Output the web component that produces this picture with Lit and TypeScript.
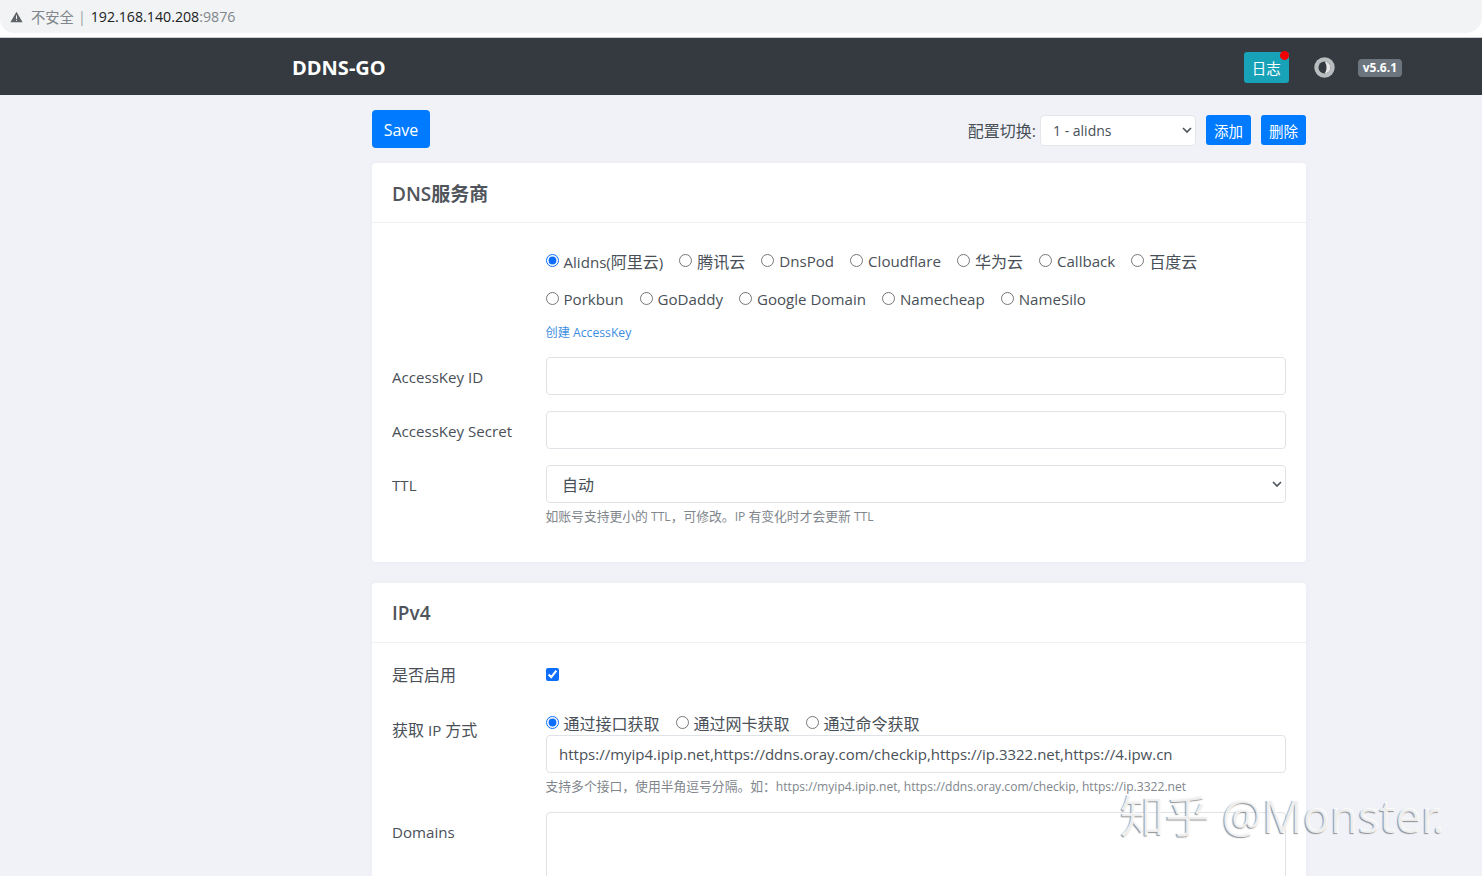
import { LitElement, html, css } from 'lit';
import { customElement } from 'lit/decorators.js';

const chevron = html`<svg class="chev" width="10" height="6" viewBox="0 0 10 6"><path d="M1 1l4 4 4-4" fill="none" stroke="#50565c" stroke-width="1.7"/></svg>`;

@customElement('app-root')
export class AppRoot extends LitElement {
  static styles = css`
    :host {
      display: block;
      height: 876px;
      overflow: hidden;
      position: relative;
      background: #f0f2f7;
      color: #495057;
      font-family: 'Open Sans', 'Noto Sans CJK SC', sans-serif;
      font-size: 15px;
    }
    * { box-sizing: border-box; }

    /* browser chrome */
    .chrome {
      height: 38px;
      background: #fff;
      border-bottom: 1px solid #c9ccd0;
    }
    .addr {
      height: 33px;
      background: #f1f3f4;
      border-radius: 0 0 16px 14px;
      display: flex;
      align-items: center;
      padding-left: 10px;
      font-size: 14.2px;
      color: #80868b;
    }
    .addr svg { margin-right: 8px; }
    .addr .sep { margin: 0 5px 0 4px; color: #9aa0a6; }
    .addr .host { color: #202124; }
    .addr .cn { font-size: 14.3px; }

    /* navbar */
    .nav {
      height: 57px;
      background: #343a40;
      display: flex;
      align-items: center;
      padding: 1px 80px 0 292px;
    }
    .brand {
      color: #fff;
      font-weight: 700;
      font-size: 20px;
      flex: 1;
    }
    .log {
      position: relative;
      width: 45px;
      height: 31px;
      background: #17a2b8;
      color: #fff;
      border: 0;
      border-radius: 3px;
      font: inherit;
      font-size: 14.5px;
      padding: 0;
      margin-right: 25px;
    }
    .dot {
      position: absolute;
      top: -1px;
      right: 0;
      width: 9px;
      height: 9px;
      border-radius: 50%;
      background: #f00000;
    }
    .theme { display: block; margin-right: 23px; }
    .badge {
      background: #6c757d;
      color: #fff;
      font-size: 12px;
      font-weight: 700;
      border-radius: 4px;
      padding: 0 5px;
      height: 18px;
      line-height: 18px;
      margin-top: 1px;
    }

    /* page */
    .main {
      width: 934px;
      margin-left: 372px;
    }
    .toolbar {
      display: flex;
      align-items: center;
      height: 68px;
    }
    .save {
      width: 58px;
      height: 38px;
      background: #007bff;
      color: #fff;
      border: 0;
      border-radius: 4px;
      font: inherit;
      font-size: 16px;
      padding: 1px 0 0;
    }
    .switch {
      margin-left: auto;
      display: flex;
      align-items: center;
      font-size: 16px;
      padding-top: 2px;
    }
    .select-wrap { position: relative; display: block; }
    .chev { position: absolute; top: 50%; right: 4px; margin-top: -3px; pointer-events: none; }
    .switch .select-wrap { margin: 0 10px 0 4px; }
    .switch select {
      display: block;
      appearance: none;
      width: 156px;
      height: 31px;
      padding: 0 12px;
      background: #fff;
      border: 1px solid #e3e6ea;
      border-radius: 4px;
      color: #495057;
      font: inherit;
      font-size: 14px;
    }
    .small {
      width: 45px;
      height: 30px;
      background: #007bff;
      color: #fff;
      border: 0;
      border-radius: 3px;
      font: inherit;
      font-size: 14.5px;
      padding: 0;
    }
    .small + .small { margin-left: 10px; }

    .card {
      background: #fff;
      border-radius: 4px;
      margin-bottom: 21px;
      box-shadow: 0 0 6px rgba(0, 0, 0, 0.03);
    }
    .card-head {
      height: 60px;
      padding: 0 20px;
      display: flex;
      align-items: center;
      font-size: 19px;
      font-weight: 600;
      color: #50555b;
      border-bottom: 1px solid #eff0f2;
    }
    .card-body { padding: 19px 20px 0; }
    .dns-body { height: 339px; }

    .row { display: flex; }
    .label {
      width: 153.5px;
      flex: none;
      padding-top: 9px;
      line-height: 22px;
      font-size: 15.1px;
    }
    .cn { font-size: 16px; }
    .field { flex: 1; min-width: 0; }

    .radios {
      display: flex;
      align-items: center;
      height: 38px;
      font-size: 15.1px;
    }
    .radios label { display: flex; align-items: center; margin-right: 16px; }
    .radios input {
      width: 13px;
      height: 13px;
      margin: 0 5px 2px 0;
      accent-color: #0d6efd;
    }
    .link {
      font-size: 12.2px;
      color: #3d8ee0;
      line-height: 18px;
      margin: 6px 0 15px;
    }
    .control {
      display: block;
      width: 100%;
      height: 38px;
      border: 1px solid #dfe2e6;
      border-radius: 4px;
      background: #fff;
      color: #495057;
      font: inherit;
      padding: 0 12.5px;
      margin-bottom: 16px;
      font-size: 15px;
    }
    select.control {
      appearance: none;
      font-size: 16px;
      padding: 2px 15.5px 0;
      margin-bottom: 0;
    }
    .help {
      font-size: 12.1px;
      color: #80868c;
      line-height: 16px;
      margin-top: 5px;
      white-space: nowrap;
    }
    .help .zh { font-size: 12.8px; }
    .enable-row { height: 49px; align-items: flex-start; }
    .enable-row .label { padding-top: 2px; }
    .enable-row input {
      width: 13px;
      height: 13px;
      margin: 6px 0 0 0;
      accent-color: #0d6efd;
    }
    .ip-row .label { padding-top: 8px; }
    .ip-row .radios { height: 24px; }
    .ip-row .control { margin-bottom: 0; font-size: 15px; }
    .domains { margin-top: 17px; }
    .domains .label { padding-top: 9px; }
    .domains textarea {
      height: 150px;
      resize: none;
    }

    .watermark {
      position: absolute;
      left: 1120px;
      top: 787px;
      font-family: 'Noto Sans', 'Noto Sans CJK SC', sans-serif;
      font-size: 45px;
      line-height: 58px;
      white-space: nowrap;
      color: rgba(255, 255, 255, 0.85);
      text-shadow: -1px 1px 1px rgba(110, 110, 110, 0.75);
    }
  `;

  radio(text: unknown, name: string, checked = false) {
    return html`<label><input type="radio" name=${name} ?checked=${checked} /><span>${text}</span></label>`;
  }

  render() {
    const cn = (t: string) => html`<span class="cn">${t}</span>`;
    const zh = (t: string) => html`<span class="zh">${t}</span>`;
    return html`
      <div class="chrome">
        <div class="addr">
          <svg width="13" height="12" viewBox="0 0 13 12"><path d="M6.5 .8 12.6 11.2H.4Z" fill="#5f6368"/><rect x="6" y="4.4" width="1" height="3.6" fill="#f1f3f4"/><rect x="6" y="8.8" width="1" height="1" fill="#f1f3f4"/></svg>
          <span class="cn">不安全</span><span class="sep">|</span><span class="host">192.168.140.208</span>:9876
        </div>
      </div>
      <div class="nav">
        <div class="brand">DDNS-GO</div>
        <button class="log">日志<span class="dot"></span></button>
        <svg class="theme" width="21" height="21" viewBox="0 0 21 21">
          <circle cx="10.5" cy="10.5" r="10.2" fill="#b9bdc0"/>
          <circle cx="10.5" cy="10.5" r="6" fill="#343a40"/>
          <path d="M10.5 4.5a6 6 0 0 1 0 12c1.4-1.6 2-3.6 2-6s-.6-4.4-2-6Z" fill="#e4e6e7"/>
        </svg>
        <span class="badge">v5.6.1</span>
      </div>
      <div class="main">
        <div class="toolbar">
          <button class="save">Save</button>
          <div class="switch">
            配置切换:
            <span class="select-wrap">
              <select><option>1 - alidns</option></select>
              ${chevron}
            </span>
            <button class="small">添加</button>
            <button class="small">删除</button>
          </div>
        </div>

        <section class="card">
          <div class="card-head">DNS服务商</div>
          <div class="card-body dns-body">
            <div class="row">
              <div class="label"></div>
              <div class="field">
                <div class="radios">
                  ${this.radio(html`Alidns(${cn('阿里云')})`, 'dns', true)}
                  ${this.radio(cn('腾讯云'), 'dns')}
                  ${this.radio('DnsPod', 'dns')}
                  ${this.radio('Cloudflare', 'dns')}
                  ${this.radio(cn('华为云'), 'dns')}
                  ${this.radio('Callback', 'dns')}
                  ${this.radio(cn('百度云'), 'dns')}
                </div>
                <div class="radios">
                  ${this.radio('Porkbun', 'dns')}
                  ${this.radio('GoDaddy', 'dns')}
                  ${this.radio('Google Domain', 'dns')}
                  ${this.radio('Namecheap', 'dns')}
                  ${this.radio('NameSilo', 'dns')}
                </div>
                <div class="link">创建 AccessKey</div>
              </div>
            </div>
            <div class="row">
              <div class="label">AccessKey ID</div>
              <div class="field"><input class="control" /></div>
            </div>
            <div class="row">
              <div class="label">AccessKey Secret</div>
              <div class="field"><input class="control" /></div>
            </div>
            <div class="row">
              <div class="label">TTL</div>
              <div class="field">
                <span class="select-wrap">
                  <select class="control"><option>自动</option></select>
                  ${chevron}
                </span>
                <div class="help">${zh('如账号支持更小的')} TTL${zh('，可修改。')}IP ${zh('有变化时才会更新')} TTL</div>
              </div>
            </div>
          </div>
        </section>

        <section class="card">
          <div class="card-head">IPv4</div>
          <div class="card-body">
            <div class="row enable-row">
              <div class="label">${cn('是否启用')}</div>
              <div class="field"><input type="checkbox" checked /></div>
            </div>
            <div class="row ip-row">
              <div class="label">${cn('获取')} IP ${cn('方式')}</div>
              <div class="field">
                <div class="radios">
                  ${this.radio(cn('通过接口获取'), 'ip', true)}
                  ${this.radio(cn('通过网卡获取'), 'ip')}
                  ${this.radio(cn('通过命令获取'), 'ip')}
                </div>
                <input class="control" value="https://myip4.ipip.net,https://ddns.oray.com/checkip,https://ip.3322.net,https://4.ipw.cn" />
                <div class="help">${zh('支持多个接口，使用半角逗号分隔。如：')}https://myip4.ipip.net, https://ddns.oray.com/checkip, https://ip.3322.net</div>
              </div>
            </div>
            <div class="row domains">
              <div class="label">Domains</div>
              <div class="field"><textarea class="control"></textarea></div>
            </div>
          </div>
        </section>
      </div>
      <div class="watermark">知乎 @Monster.</div>
    `;
  }
}
